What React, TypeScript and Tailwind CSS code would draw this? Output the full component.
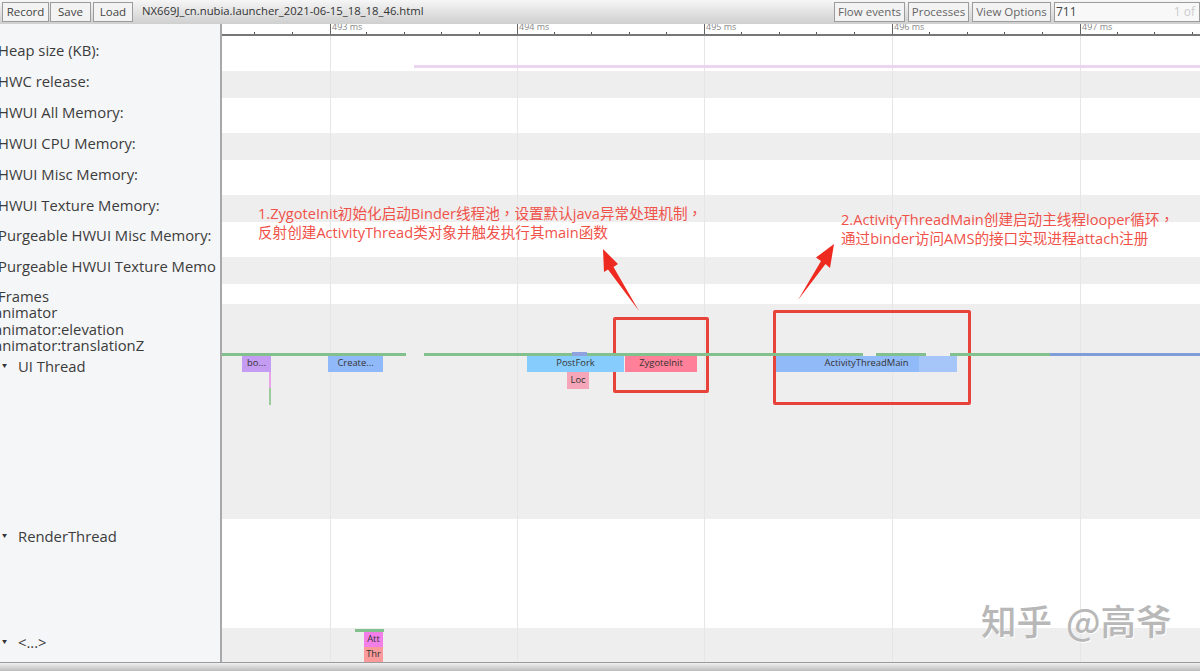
const font = "font-['Open_Sans','Noto_Sans_CJK_SC',sans-serif]";

type Slice = { x: number; y: number; w: number; h: number; color: string; label?: string };

const GREEN = "bg-[#82c08e]";

// x is in page px, y is relative to the top of the track
const tracks: { cls: string; slices?: Slice[] }[] = [
  { cls: "h-[35px] bg-white", slices: [{ x: 414, y: 29, w: 786, h: 3, color: "bg-[#ecd5f0]" }] },
  { cls: "h-[27px] bg-[#eeeeee]" },
  { cls: "h-[35px] bg-white" },
  { cls: "h-[27px] bg-[#eeeeee]" },
  { cls: "h-[35px] bg-white" },
  { cls: "h-[27px] bg-[#eeeeee]" },
  { cls: "h-[35px] bg-white" },
  { cls: "h-[27px] bg-[#eeeeee]" },
  { cls: "h-[20px] bg-white" },
  {
    cls: "h-[215px] bg-[#eeeeee]",
    slices: [
      { x: 222, y: 49, w: 184, h: 3, color: GREEN },
      { x: 424, y: 49, w: 439, h: 3, color: GREEN },
      { x: 876, y: 49, w: 50, h: 3, color: GREEN },
      { x: 950, y: 49, w: 100, h: 3, color: GREEN },
      { x: 1050, y: 49, w: 150, h: 3, color: "bg-[#7f9dd6]" },
      { x: 572, y: 48, w: 15, h: 4, color: "bg-[#8fa3e0]" },
      { x: 242, y: 52, w: 29, h: 16, color: "bg-[#c49df2]", label: "bo..." },
      { x: 269, y: 68, w: 2, h: 16, color: "bg-[#e8a2e8]" },
      { x: 269, y: 84, w: 2, h: 17, color: "bg-[#9ccc9c]" },
      { x: 328, y: 52, w: 55, h: 16, color: "bg-[#90b9fa]", label: "Create..." },
      { x: 527, y: 52, w: 97, h: 16, color: "bg-[#86cdfd]", label: "PostFork" },
      { x: 567, y: 68, w: 22, h: 17, color: "bg-[#f5a6b8]", label: "Loc" },
      { x: 625, y: 52, w: 72, h: 16, color: "bg-[#ff8098]", label: "ZygoteInit" },
      { x: 776, y: 52, w: 181, h: 16, color: "bg-[#91baf8]", label: "ActivityThreadMain" },
      { x: 919, y: 52, w: 38, h: 16, color: "bg-[#a6c6fa]" },
    ],
  },
  { cls: "h-[109px] bg-white" },
  {
    cls: "h-[34px] bg-[#eeeeee]",
    slices: [
      { x: 355, y: 1, w: 29, h: 3, color: GREEN },
      { x: 364, y: 4, w: 19, h: 15, color: "bg-[#f27fe8]", label: "Att" },
      { x: 364, y: 19, w: 19, h: 15, color: "bg-[#fa9a9a]", label: "Thr" },
    ],
  },
];

const labels = [
  "Heap size (KB):",
  "HWC release:",
  "HWUI All Memory:",
  "HWUI CPU Memory:",
  "HWUI Misc Memory:",
  "HWUI Texture Memory:",
  "Purgeable HWUI Misc Memory:",
  "Purgeable HWUI Texture Memo",
];

const gridLines = [330, 517, 704, 892, 1080];

function ToolButton({ label, className }: { label: string; className: string }) {
  return (
    <button className={`h-[20px] shrink-0 border border-[#9c9c9c] bg-[#f3f3f3] text-[11.5px] leading-none ${className}`}>
      {label}
    </button>
  );
}

function Ruler() {
  const minor = [254, 292, 366, 404, 441, 479, 554, 591, 629, 666, 741, 779, 816, 854, 929, 967, 1004, 1042, 1117, 1154, 1192];
  return (
    <svg className="block h-[12px] w-[978px] shrink-0" viewBox="222 24 978 12">
      <rect x="222" y="34" width="978" height="2" fill="#777" />
      {minor.map((x) => (
        <rect key={x} x={x} y="32" width="1" height="2" fill="#555" />
      ))}
      {gridLines.map((x, i) => (
        <g key={x}>
          <rect x={x} y="24" width="1" height="10" fill="#666" />
          <text x={x + 2} y="30" fontSize="9" fill="#888" fontFamily="Open Sans">{`${493 + i} ms`}</text>
        </g>
      ))}
    </svg>
  );
}

function ThreadRow({ name, className }: { name: string; className: string }) {
  return (
    <div className={`flex h-[20px] items-center ${className}`}>
      <span className="ml-[2px] w-[6px] text-[5px] text-[#333]">▼</span>
      <span className="ml-[10px]">{name}</span>
    </div>
  );
}

export default function App() {
  return (
    <div className={`relative flex h-[671px] w-[1200px] flex-col overflow-hidden bg-white ${font}`}>
      <header className="flex h-[24px] shrink-0 items-center bg-gradient-to-b from-[#f6f6f6] to-[#cfcfcf] pb-[1px]">
        <div className="ml-[2px] flex gap-[1px]">
          <ToolButton label="Record" className="w-[47px] text-[#444]" />
          <ToolButton label="Save" className="w-[41px] text-[#444]" />
          <ToolButton label="Load" className="ml-[1px] w-[40px] text-[#444]" />
        </div>
        <span className="ml-[9px] text-[11.3px] text-[#333]">NX669J_cn.nubia.launcher_2021-06-15_18_18_46.html</span>
        <div className="ml-auto flex gap-[3px]">
          <ToolButton label="Flow events" className="w-[71px] text-[#666]" />
          <ToolButton label="Processes" className="w-[61px] text-[#666]" />
          <ToolButton label="View Options" className="w-[79px] text-[#666]" />
          <div className="flex h-[20px] w-[146px] items-center justify-between overflow-hidden border border-[#9c9c9c] bg-[#f8f8f8] pl-[1px] text-[12px] text-[#444]">
            <span>711</span>
            <span className="mr-[-6px] text-[#ccc]">1 of 5</span>
          </div>
        </div>
      </header>

      <div className="flex h-[638px] shrink-0">
        <aside className="w-[222px] shrink-0 overflow-hidden border-r-2 border-[#a8a8a8] bg-[#f5f6f7] pt-[11px] text-[14.8px] text-[#3c3c3c]">
          {labels.map((l) => (
            <div key={l} className="ml-[-2px] flex h-[30.85px] items-center whitespace-nowrap">{l}</div>
          ))}
          <div className="ml-[-2px] mt-[6px] leading-[16.5px]">
            <div>Frames</div>
            <div className="ml-[-4px]">animator</div>
            <div className="ml-[-4px]">animator:elevation</div>
            <div className="ml-[-4px]">animator:translationZ</div>
          </div>
          <ThreadRow name="UI Thread" className="mt-[2px]" />
          <ThreadRow name="RenderThread" className="mt-[150px]" />
          <ThreadRow name="<...>" className="mt-[86px]" />
        </aside>

        <main className="relative flex min-w-0 flex-1 flex-col">
          <Ruler />
          {tracks.map((t, i) => (
            <div key={i} className={`relative shrink-0 overflow-hidden ${t.cls}`}>
              {t.slices?.map((s) => (
                <div
                  key={`${s.x}-${s.y}`}
                  className={`absolute z-10 flex items-center justify-center overflow-hidden whitespace-nowrap pb-[2px] text-[9.4px] leading-none text-[#333] ${s.color}`}
                  style={{ left: s.x - 222, top: s.y, width: s.w, height: s.h }}
                >
                  {s.label}
                </div>
              ))}
            </div>
          ))}
          {gridLines.map((x) => (
            <div key={x} className="absolute bottom-0 top-[12px] w-px bg-[#e6e6e6]" style={{ left: x - 222 }} />
          ))}
        </main>
      </div>

      <footer className="h-[9px] shrink-0 border-t border-[#9a9a9a] bg-gradient-to-b from-[#f0f0f0] to-[#bdbdbd]" />

      {/* red annotations drawn over the trace */}
      <div className="absolute left-[613px] top-[317px] h-[76px] w-[96px] rounded-[2px] border-[3px] border-[#e8433a]" />
      <div className="absolute left-[773px] top-[310px] h-[95px] w-[198px] rounded-[2px] border-[3px] border-[#e8433a]" />

      <div className="absolute left-[258px] top-[204px] whitespace-nowrap text-[14.6px] leading-[18.5px] text-[#f0524a]">
        <div>1.ZygoteInit初始化启动Binder线程池<span className="font-['Noto_Sans_CJK_TC']">，</span>设置默认java异常处理机制<span className="font-['Noto_Sans_CJK_TC']">，</span></div>
        <div>反射创建ActivityThread类对象并触发执行其main函数</div>
      </div>
      <div className="absolute left-[841px] top-[209px] whitespace-nowrap text-[14.6px] leading-[19px] text-[#f0524a]">
        <div>2.ActivityThreadMain创建启动主线程looper循环<span className="font-['Noto_Sans_CJK_TC']">，</span></div>
        <div>通过binder访问AMS的接口实现进程attach注册</div>
      </div>

      <svg className="absolute left-0 top-0 h-[671px] w-[1200px]" viewBox="0 0 1200 671" fill="none">
        <polygon points="603,249 618,264 613.5,267 639,311 608,269.5 604,272" fill="#ee2a20" />
        <polygon points="834,244 830,268 825.5,264 798,300 821,261 816,257.5" fill="#ee2a20" />
      </svg>

      {/* watermark */}
      <div className="absolute left-[981px] top-[598px] whitespace-nowrap font-['Noto_Sans_CJK_SC',sans-serif] text-[35.5px] font-medium leading-[44px] text-[#b8b8b8] [word-spacing:6px] [text-shadow:1px_1px_0_#ffffff]">
        知乎 @高爷
      </div>
    </div>
  );
}
